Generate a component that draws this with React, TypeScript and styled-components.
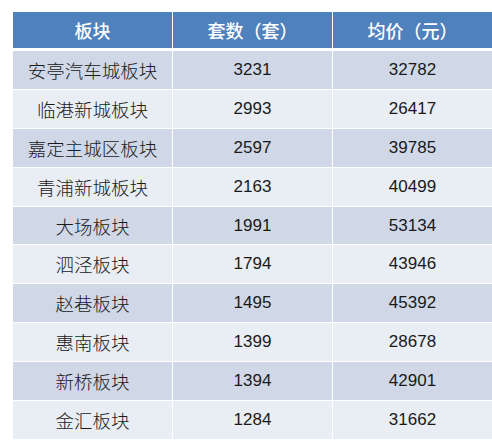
import styled, { createGlobalStyle } from "styled-components";

const GlobalStyle = createGlobalStyle`
  html, body {
    margin: 0;
    padding: 0;
    background: #fff;
  }
`;

const Page = styled.div`
  width: 492px;
  height: 448px;
  padding: 12px 0 0 13px;
  box-sizing: border-box;
  background: #fff;
`;

const Table = styled.div`
  display: flex;
  flex-direction: column;
  width: 479px;
`;

const HeaderRow = styled.div`
  display: grid;
  grid-template-columns: 159px 159px 1fr;
  column-gap: 1px;
  height: 36px;
  margin-bottom: 3px;
`;

const HeaderCell = styled.div`
  display: flex;
  align-items: center;
  justify-content: center;
  background: #4f81bd;
  color: #fff;
  font-family: "Noto Sans CJK SC", "Liberation Sans", sans-serif;
  font-size: 18px;
  font-weight: 500;
`;

const Body = styled.div`
  display: flex;
  flex-direction: column;
  gap: 1px;
`;

const Row = styled.div<{ $band: boolean }>`
  display: grid;
  grid-template-columns: 159px 159px 1fr;
  column-gap: 1px;
  height: 37.9px;

  & > div {
    background: ${(p) => (p.$band ? "#d0d8e8" : "#e9edf4")};
  }
`;

const NameCell = styled.div`
  display: flex;
  align-items: center;
  justify-content: center;
  color: #1a1a1a;
  font-family: "Noto Sans CJK SC", sans-serif;
  font-size: 18.5px;
  font-weight: 300;
`;

const NumCell = styled.div`
  display: flex;
  align-items: center;
  justify-content: center;
  color: #1a1a1a;
  font-family: "Liberation Sans", Arial, sans-serif;
  font-size: 17px;
`;

const rows: [string, number, number][] = [
  ["安亭汽车城板块", 3231, 32782],
  ["临港新城板块", 2993, 26417],
  ["嘉定主城区板块", 2597, 39785],
  ["青浦新城板块", 2163, 40499],
  ["大场板块", 1991, 53134],
  ["泗泾板块", 1794, 43946],
  ["赵巷板块", 1495, 45392],
  ["惠南板块", 1399, 28678],
  ["新桥板块", 1394, 42901],
  ["金汇板块", 1284, 31662],
];

export default function App() {
  return (
    <>
      <GlobalStyle />
      <Page>
        <Table>
          <HeaderRow>
            <HeaderCell>板块</HeaderCell>
            <HeaderCell>套数（套）</HeaderCell>
            <HeaderCell>均价（元）</HeaderCell>
          </HeaderRow>
          <Body>
            {rows.map(([name, count, price], i) => (
              <Row key={name} $band={i % 2 === 0}>
                <NameCell>{name}</NameCell>
                <NumCell>{count}</NumCell>
                <NumCell>{price}</NumCell>
              </Row>
            ))}
          </Body>
        </Table>
      </Page>
    </>
  );
}
